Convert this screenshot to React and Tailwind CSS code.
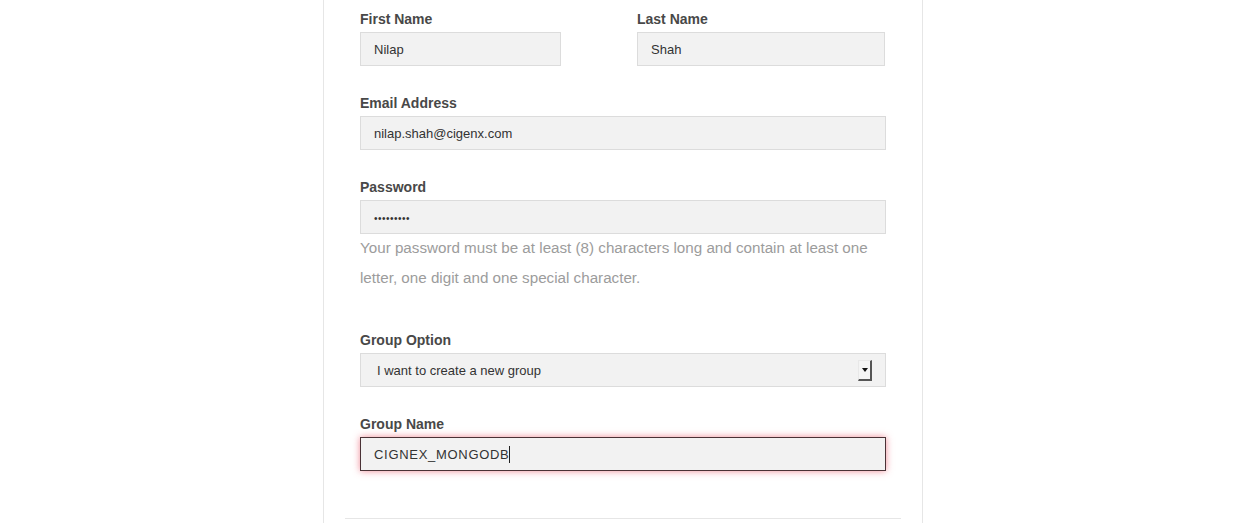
const font = { fontFamily: '"Liberation Sans", Arial, sans-serif' }

function Label({ children }) {
  return <div className="h-5 mb-1 text-[14px] leading-[22px] font-bold text-[#484848]">{children}</div>
}

function Field({ value, className = '' }) {
  return (
    <div className={`h-[34px] border border-[#dcdcdc] bg-[#f2f2f2] pl-[13px] text-[13px] leading-[33px] text-[#333] ${className}`}>
      {value}
    </div>
  )
}

export default function App() {
  return (
    <div className="min-h-[523px] bg-white" style={font}>
      <div className="ml-[323px] w-[600px] h-[523px] border-x border-[#e6e6e6] pt-2">
        <div className="pl-[36px] pr-[36px]">
          <div className="flex">
            <div className="w-[277px]">
              <Label>First Name</Label>
              <Field value="Nilap" className="w-[201px]" />
            </div>
            <div className="w-[248px]">
              <Label>Last Name</Label>
              <Field value="Shah" />
            </div>
          </div>

          <div className="mt-[26px]">
            <Label>Email Address</Label>
            <Field value="nilap.shah@cigenx.com" />
          </div>

          <div className="mt-[26px]">
            <Label>Password</Label>
            <Field value={<span className="text-[10px] tracking-[0.5px]">•••••••••</span>} />
            <p className="-mt-px text-[15.2px] leading-[30px] text-[#9c9c9c]">
              Your password must be at least (8) characters long and contain at least one letter, one digit and one special character.
            </p>
          </div>

          <div className="mt-[36px]">
            <Label>Group Option</Label>
            <div className="h-[34px] border border-[#dcdcdc] bg-[#f2f2f2] pl-[16px] pr-[13px] flex items-center justify-between text-[13px] text-[#333]">
              <span className="pt-px">I want to create a new group</span>
              <div className="w-[14px] h-[21px] bg-[#f4f4f4] border-t border-l border-[#e8e8e8] border-r-2 border-b-2 border-r-[#555] border-b-[#555] flex items-center justify-center">
                <svg width="6" height="4" viewBox="0 0 6 4">
                  <path d="M0 0h6L3 4z" fill="#111" />
                </svg>
              </div>
            </div>
          </div>

          <div className="mt-[26px]">
            <Label>Group Name</Label>
            <div className="h-[34px] border border-[#4a3236] bg-[#f2f2f2] pl-[13px] text-[13px] text-[#333] shadow-[0_0_7px_rgba(230,60,80,0.6)] flex items-center">
              <span className="pt-px tracking-[0.7px]">CIGNEX_MONGODB</span>
              <span className="inline-block w-px h-[17px] bg-[#222]"></span>
            </div>
          </div>
        </div>
        <div className="mt-[47px] mx-[21px] border-t border-[#e6e6e6]"></div>
      </div>
    </div>
  )
}
